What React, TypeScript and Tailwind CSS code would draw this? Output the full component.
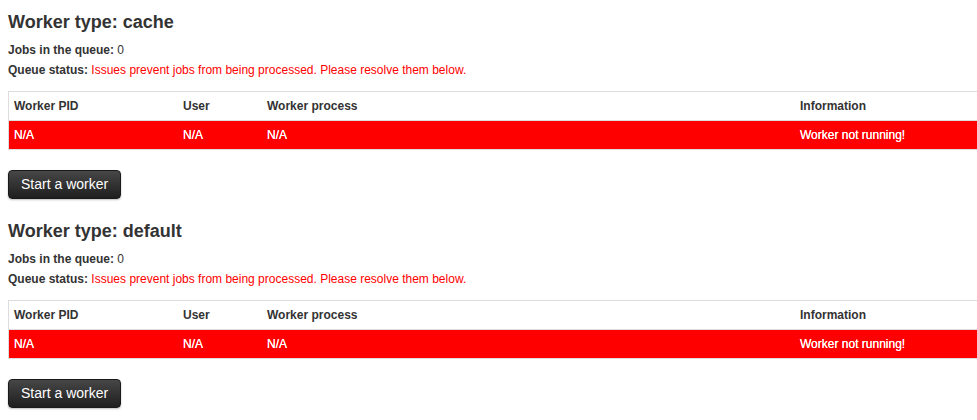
import React from 'react';

interface WorkerQueue {
    type: string;
    jobs: number;
}

const queues: WorkerQueue[] = [
    { type: 'cache', jobs: 0 },
    { type: 'default', jobs: 0 },
];

const cols = 'grid grid-cols-[169px_84px_533px_1fr]';

function WorkerSection({ queue }: { queue: WorkerQueue }) {
    return (
        <section className="flex flex-col">
            <h3 className="text-[18px] leading-[20px] font-bold text-[#333]">Worker type: {queue.type}</h3>

            <div className="mt-2 text-[12px] leading-[20px] text-[#333]">
                <div>
                    <span className="font-bold">Jobs in the queue:</span> {queue.jobs}
                </div>
                <div>
                    <span className="font-bold">Queue status:</span>{' '}
                    <span className="text-[#f00]">Issues prevent jobs from being processed. Please resolve them below.</span>
                </div>
            </div>

            {/* workers table, runs off the right edge */}
            <div className="mt-[11px] border-y border-l border-[#ddd] text-[12px] leading-[16px]">
                <div className={`${cols} border-b border-[#ddd] font-bold text-[#333]`}>
                    <div className="px-[5px] py-[6px]">Worker PID</div>
                    <div className="px-[5px] py-[6px]">User</div>
                    <div className="px-[5px] py-[6px]">Worker process</div>
                    <div className="px-[5px] py-[6px]">Information</div>
                </div>
                <div className={`${cols} bg-[#f00] text-white [text-shadow:0_0_0.4px_#fff]`}>
                    <div className="px-[5px] py-[6px]">N/A</div>
                    <div className="px-[5px] py-[6px]">N/A</div>
                    <div className="px-[5px] py-[6px]">N/A</div>
                    <div className="px-[5px] py-[6px]">Worker not running!</div>
                </div>
            </div>

            <div className="mt-5">
                <button
                    type="button"
                    className="h-[29px] px-3 rounded-[4px] border border-[#1a1a1a] bg-gradient-to-b from-[#474747] to-[#1f1f1f] text-[14px] text-white shadow-[0_1px_2px_rgba(0,0,0,0.25)]"
                >
                    Start a worker
                </button>
            </div>
        </section>
    );
}

export default function App() {
    return (
        <div className="min-h-screen bg-white pl-2 pt-3 overflow-hidden font-['Liberation_Sans',Arial,sans-serif]">
            <div className="flex flex-col gap-[22px]">
                {queues.map((q) => (
                    <WorkerSection key={q.type} queue={q} />
                ))}
            </div>
        </div>
    );
}
